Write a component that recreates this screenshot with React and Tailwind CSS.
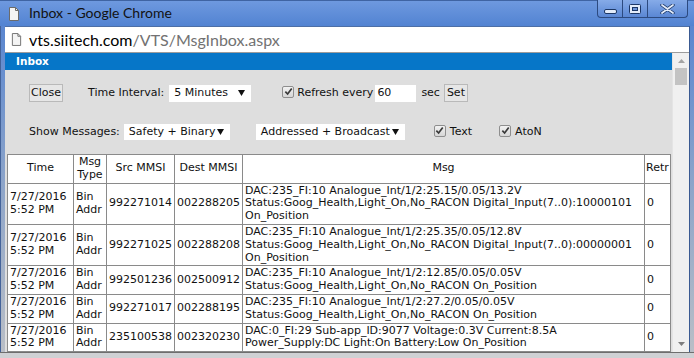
import React from 'react';

const rows = [
  {
    src: '992271014', dest: '002288205',
    msg: ['DAC:235_FI:10 Analogue_Int/1/2:25.15/0.05/13.2V', 'Status:Goog_Health,Light_On,No_RACON Digital_Input(7..0):10000101', 'On_Position'],
  },
  {
    src: '992271025', dest: '002288208',
    msg: ['DAC:235_FI:10 Analogue_Int/1/2:25.35/0.05/12.8V', 'Status:Goog_Health,Light_On,No_RACON Digital_Input(7..0):00000001', 'On_Position'],
  },
  {
    src: '992501236', dest: '002500912',
    msg: ['DAC:235_FI:10 Analogue_Int/1/2:12.85/0.05/0.05V', 'Status:Goog_Health,Light_On,No_RACON On_Position'],
  },
  {
    src: '992271017', dest: '002288195',
    msg: ['DAC:235_FI:10 Analogue_Int/1/2:27.2/0.05/0.05V', 'Status:Goog_Health,Light_On,No_RACON On_Position'],
  },
  {
    src: '235100538', dest: '002320230',
    msg: ['DAC:0_FI:29 Sub-app_ID:9077 Voltage:0.3V Current:8.5A', 'Power_Supply:DC Light:On Battery:Low On_Position'],
  },
];

function PageIcon({ className }) {
  return (
    <svg viewBox="0 0 12 16" className={className}>
      <path d="M1.5 1.5 H7.5 L10.5 4.5 V14.5 H1.5 Z" fill="#f4f4f4" stroke="#6b6b6b" strokeWidth="1" />
      <path d="M7.5 1.5 V4.5 H10.5" fill="none" stroke="#6b6b6b" strokeWidth="1" />
    </svg>
  );
}

function Arrow() {
  return (
    <svg viewBox="0 0 7 6" className="w-[7px] h-[6px]">
      <path d="M0 0 H7 L3.5 6 Z" fill="#111" />
    </svg>
  );
}

function Check() {
  return (
    <span className="inline-flex items-center justify-center w-[12px] h-[12px] border border-[#8e8e8e] rounded-[2px] bg-gradient-to-b from-[#f2f2f2] to-[#d6d6d6]">
      <svg viewBox="0 0 10 10" className="w-[9px] h-[9px]">
        <path d="M1.5 5.2 L4 7.8 L8.6 1.6" stroke="#3a3a3a" strokeWidth="1.9" fill="none" />
      </svg>
    </span>
  );
}

function Select({ label, width, height }) {
  return (
    <div className={`flex items-center justify-between bg-white pl-[5px] pr-[6px] ${width} ${height}`}>
      <span>{label}</span>
      <Arrow />
    </div>
  );
}

export default function App() {
  const td = 'border border-[#8a8a8a] px-[2px] py-px align-middle whitespace-nowrap';

  return (
    <div className="w-[694px] h-[358px] overflow-hidden flex flex-col bg-[#5a86d0] font-['DejaVu_Sans',Verdana,sans-serif] text-[11px] leading-[12.8px] text-[#111]">
      {/* title bar */}
      <div className="h-[26px] flex items-center bg-gradient-to-b from-[#6e99df] to-[#5283d2] border-t border-[#3f64a3]">
        <PageIcon className="w-[12px] h-[16px] ml-[8px]" />
        <span className="ml-[9px] -mt-px font-['Lato',sans-serif] text-[14px] leading-none text-[#121212]">Inbox - Google Chrome</span>
        <div className="ml-auto mr-[6px] self-start -mt-px flex h-[18px] border border-t-0 border-[#2c4a80] rounded-b-[4px] overflow-hidden bg-gradient-to-b from-[#86abe8] to-[#5a87d4]">
          <div className="w-[25px] border-r border-[#2c4a80] flex items-end justify-center pb-[3px]">
            <svg viewBox="0 0 13 5" className="w-[13px] h-[5px]">
              <rect x="0.5" y="0.5" width="12" height="4" rx="1.5" fill="#e3ecfa" stroke="#1c3766" />
            </svg>
          </div>
          <div className="w-[25px] border-r border-[#2c4a80] flex items-center justify-center">
            <svg viewBox="0 0 12 10" className="w-[12px] h-[10px]">
              <rect x="0.5" y="0.5" width="11" height="9" rx="1" fill="#e3ecfa" stroke="#1c3766" />
              <rect x="3.5" y="3.5" width="5" height="3" fill="#6d94d8" stroke="#1c3766" />
            </svg>
          </div>
          <div className="w-[39px] flex items-center justify-center">
            <svg viewBox="0 0 15 10" className="w-[15px] h-[10px]">
              <path d="M2 1 L13 9 M13 1 L2 9" stroke="#1c3766" strokeWidth="3.4" strokeLinecap="round" />
              <path d="M2 1 L13 9 M13 1 L2 9" stroke="#e3ecfa" strokeWidth="1.8" strokeLinecap="round" />
            </svg>
          </div>
        </div>
      </div>

      <div className="flex-1 flex min-h-0">
        <div className="w-[5px] bg-gradient-to-b from-[#5a86d0] via-[#8ea5c9] to-[#b9bec6] border-l border-[#44639a]" />

        <div className="flex-1 flex flex-col min-w-0">
          {/* address bar */}
          <div className="h-[27px] flex items-center bg-white border-t border-[#4d6fa6] border-b border-b-[#9c9c9c]">
            <PageIcon className="w-[11px] h-[15px] ml-[6px]" />
            <span className="ml-[7px] font-['Lato',sans-serif] text-[16px] leading-none">
              <span className="text-black">vts.siitech.com</span>
              <span className="text-[#727272]">/VTS/MsgInbox.aspx</span>
            </span>
          </div>

          <div className="flex-1 flex min-h-0">
            <div className="flex-1 flex flex-col min-w-0">
              <div className="h-[17px] bg-[#0676c8] flex items-center pl-[11px] text-white font-bold text-[10.5px]">Inbox</div>

              <div className="flex-1 bg-[#dedede] pt-[14px] overflow-hidden">
                {/* interval row */}
                <div className="flex items-center h-[18px]">
                  <button className="ml-[24px] w-[34px] h-[18px] bg-[#e6e6e6] border border-[#b9b9b9] text-[11px]">Close</button>
                  <span className="ml-[25px]">Time Interval:</span>
                  <div className="ml-[5px]">
                    <Select label="5 Minutes" width="w-[82px]" height="h-[17px]" />
                  </div>
                  <span className="ml-[31px]"><Check /></span>
                  <span className="ml-[3px]">Refresh every</span>
                  <div className="ml-[2px] w-[41px] h-[17px] bg-white flex items-center pl-[2px]">60</div>
                  <span className="ml-[5px]">sec</span>
                  <button className="ml-[4px] w-[24px] h-[18px] bg-[#e6e6e6] border border-[#b9b9b9] text-[11px]">Set</button>
                </div>

                {/* filter row */}
                <div className="flex items-center h-[16px] mt-[22px]">
                  <span className="ml-[24px]">Show Messages:</span>
                  <div className="ml-[4px]">
                    <Select label="Safety + Binary" width="w-[106px]" height="h-[16px]" />
                  </div>
                  <div className="ml-[26px]">
                    <Select label="Addressed + Broadcast" width="w-[149px]" height="h-[16px]" />
                  </div>
                  <span className="ml-[29px]"><Check /></span>
                  <span className="ml-[4px]">Text</span>
                  <span className="ml-[27px]"><Check /></span>
                  <span className="ml-[4px]">AtoN</span>
                </div>

                <table className="mt-[14px] ml-[2px] w-[663px] table-fixed border-collapse bg-white">
                  <colgroup>
                    <col className="w-[66px]" />
                    <col className="w-[33px]" />
                    <col className="w-[68px]" />
                    <col className="w-[68px]" />
                    <col className="w-[402px]" />
                    <col className="w-[26px]" />
                  </colgroup>
                  <thead>
                    <tr>
                      <th className={`${td} font-normal text-center`}>Time</th>
                      <th className={`${td} font-normal text-center`}>Msg<br />Type</th>
                      <th className={`${td} font-normal text-center`}>Src MMSI</th>
                      <th className={`${td} font-normal text-center`}>Dest MMSI</th>
                      <th className={`${td} font-normal text-center`}>Msg</th>
                      <th className="border border-[#8a8a8a] px-0 py-px align-middle whitespace-nowrap font-normal text-left pl-[1px] overflow-hidden">Retr</th>
                    </tr>
                  </thead>
                  <tbody>
                    {rows.map((r) => (
                      <tr key={r.src}>
                        <td className={td}>7/27/2016<br />5:52 PM</td>
                        <td className={td}>Bin<br />Addr</td>
                        <td className={td}>{r.src}</td>
                        <td className={td}>{r.dest}</td>
                        <td className={td}>
                          {r.msg.map((line, i) => (
                            <div key={i}>{line}</div>
                          ))}
                        </td>
                        <td className={td}>0</td>
                      </tr>
                    ))}
                  </tbody>
                </table>
              </div>
            </div>

            {/* scrollbar */}
            <div className="w-[17px] bg-[#f0f0f0] border-l border-[#e4e4e4] flex flex-col items-center">
              <div className="h-[15px] flex items-center justify-center">
                <svg viewBox="0 0 7 4" className="w-[7px] h-[4px]"><path d="M0 4 H7 L3.5 0 Z" fill="#a3a3a3" /></svg>
              </div>
              <div className="w-[12px] h-[17px] bg-[#c3c3c3]" />
              <div className="flex-1" />
              <div className="h-[16px] flex items-center justify-center">
                <svg viewBox="0 0 7 4" className="w-[7px] h-[4px]"><path d="M0 0 H7 L3.5 4 Z" fill="#7d7d7d" /></svg>
              </div>
            </div>
          </div>
        </div>

        <div className="w-[5px] bg-gradient-to-b from-[#5a86d0] via-[#8ea5c9] to-[#b9bec6] border-l border-[#3a5a92]" />
      </div>

      <div className="h-[6px] bg-[#cfd1d4] border-t border-[#6e6e6e]" />
    </div>
  );
}
